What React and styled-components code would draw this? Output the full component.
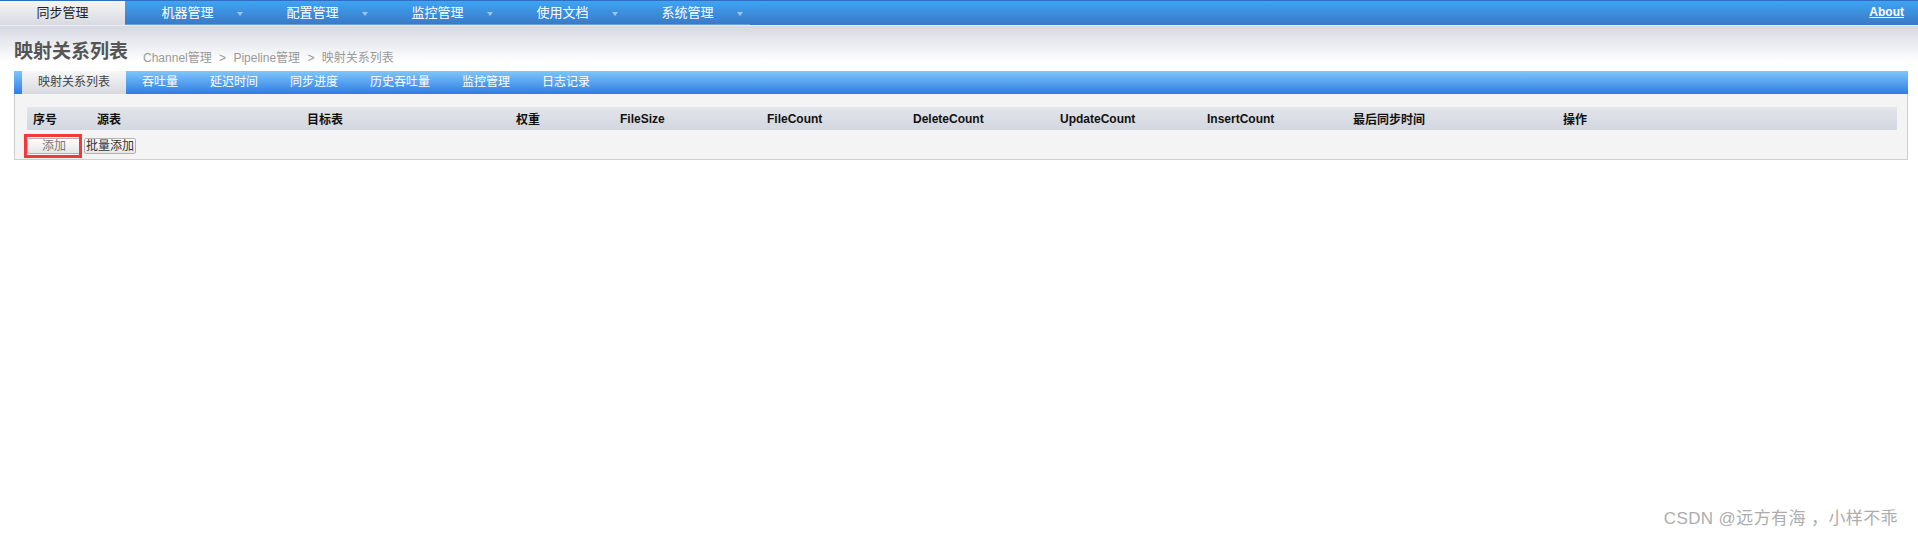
import React from "react";
import styled, { createGlobalStyle } from "styled-components";

const GlobalStyle = createGlobalStyle`
  body {
    margin: 0;
    background: #fff;
    font-family: "Liberation Sans", "Noto Sans CJK SC", sans-serif;
    font-size: 12px;
  }
`;

const Page = styled.div`
  position: relative;
  height: 536px;
  overflow: hidden;
`;

const TopNav = styled.div`
  display: flex;
  height: 24px;
  border-top: 1px solid #2f6fc0;
  border-bottom: 1px solid #e9eef6;
  background: linear-gradient(#3ea4f3, #3a78c6);
`;

const NavItem = styled.div`
  position: relative;
  width: 125px;
  line-height: 24px;
  text-align: center;
  font-size: 13px;
  color: ${p => (p.$active ? "#222" : "#fff")};
  background: ${p => (p.$active ? "linear-gradient(#f5f5f5, #d7dae0)" : "transparent")};
  box-shadow: ${p => (p.$active ? "none" : "inset 0 -1px 0 #6d9ddb")};
`;

const Arrow = styled.span`
  position: absolute;
  top: 11px;
  right: 7px;
  border-left: 3px solid transparent;
  border-right: 3px solid transparent;
  border-top: 4px solid #9dc6f0;
`;

const About = styled.a`
  margin-left: auto;
  padding-right: 14px;
  line-height: 22px;
  color: #fff;
  font-weight: bold;
  font-size: 12px;
  text-decoration: underline;
`;

const Header = styled.div`
  display: flex;
  align-items: flex-start;
  height: 29px;
  padding: 16px 0 0 14px;
  background: linear-gradient(#d5d9e1, #fff 36px);
`;

const Title = styled.h1`
  margin: 0;
  font-size: 19px;
  line-height: 20px;
  font-weight: bold;
  color: #555;
`;

const Crumbs = styled.div`
  margin: 9px 0 0 15px;
  line-height: 14px;
  color: #999;
  font-size: 12px;
  word-spacing: 4px;
`;

const SubTabs = styled.div`
  display: flex;
  height: 23px;
  margin: 0 10px 0 14px;
  padding-left: 8px;
  background: linear-gradient(#7fc6fb, #2e7de5);
`;

const SubTab = styled.div`
  padding: 0 16px;
  line-height: 23px;
  font-size: 12px;
  color: ${p => (p.$active ? "#444" : "#fff")};
  background: ${p => (p.$active ? "linear-gradient(#f7f7f7, #d6d9df)" : "transparent")};
`;

const Panel = styled.div`
  margin: 0 10px 0 14px;
  padding: 13px 10px 5px 12px;
  border: 1px solid #cfcfcf;
  border-top: none;
  background: #f4f4f4;
`;

const HeadRow = styled.div`
  display: grid;
  grid-template-columns: 64px 210px 209px 104px 147px 146px 147px 147px 146px 210px 1fr;
  height: 23px;
  align-items: center;
  background: linear-gradient(#e3e5ea, #d2d6de);
  font-weight: bold;
  font-size: 12px;
  color: #111;
`;

const HeadCell = styled.div`
  padding-left: 6px;
  white-space: nowrap;
`;

const Actions = styled.div`
  display: flex;
  gap: 3px;
  margin-top: 8px;
`;

const Button = styled.button`
  position: relative;
  height: 16px;
  padding: 0 ${p => (p.$wide ? "14px" : "1px")};
  border: 1px solid #b3b3b3;
  border-radius: 2px;
  background: linear-gradient(#fdfdfd, #e6e6e6);
  font-family: inherit;
  font-size: 12px;
  line-height: 14px;
  color: ${p => (p.$muted ? "#777" : "#333")};

  ${p =>
    p.$marked &&
    `&::after {
      content: "";
      position: absolute;
      top: -5px;
      left: -4px;
      right: -2px;
      bottom: -5px;
      border: 3px solid #f23a3a;
    }`}
`;

const Watermark = styled.div`
  position: absolute;
  right: 20px;
  top: 504px;
  font-family: "Liberation Sans", "Noto Sans CJK SC", sans-serif;
  font-size: 17px;
  letter-spacing: 0.4px;
  color: #adadad;
`;

const navItems = ["同步管理", "机器管理", "配置管理", "监控管理", "使用文档", "系统管理"];
const subTabs = ["映射关系列表", "吞吐量", "延迟时间", "同步进度", "历史吞吐量", "监控管理", "日志记录"];
const columns = [
  "序号", "源表", "目标表", "权重", "FileSize", "FileCount",
  "DeleteCount", "UpdateCount", "InsertCount", "最后同步时间", "操作"
];

export default function App() {
  return (
    <Page>
      <GlobalStyle />
      <TopNav>
        {navItems.map((name, i) => (
          <NavItem key={name} $active={i === 0}>
            {name}
            {i > 0 && <Arrow />}
          </NavItem>
        ))}
        <About href="#">About</About>
      </TopNav>
      <Header>
        <Title>映射关系列表</Title>
        <Crumbs>Channel管理 &gt; Pipeline管理 &gt; 映射关系列表</Crumbs>
      </Header>
      <SubTabs>
        {subTabs.map((name, i) => (
          <SubTab key={name} $active={i === 0}>{name}</SubTab>
        ))}
      </SubTabs>
      <Panel>
        <HeadRow>
          {columns.map(c => (
            <HeadCell key={c}>{c}</HeadCell>
          ))}
        </HeadRow>
        <Actions>
          <Button $wide $muted $marked>添加</Button>
          <Button>批量添加</Button>
        </Actions>
      </Panel>
      <Watermark>CSDN @远方有海 ，小样不乖</Watermark>
    </Page>
  );
}
